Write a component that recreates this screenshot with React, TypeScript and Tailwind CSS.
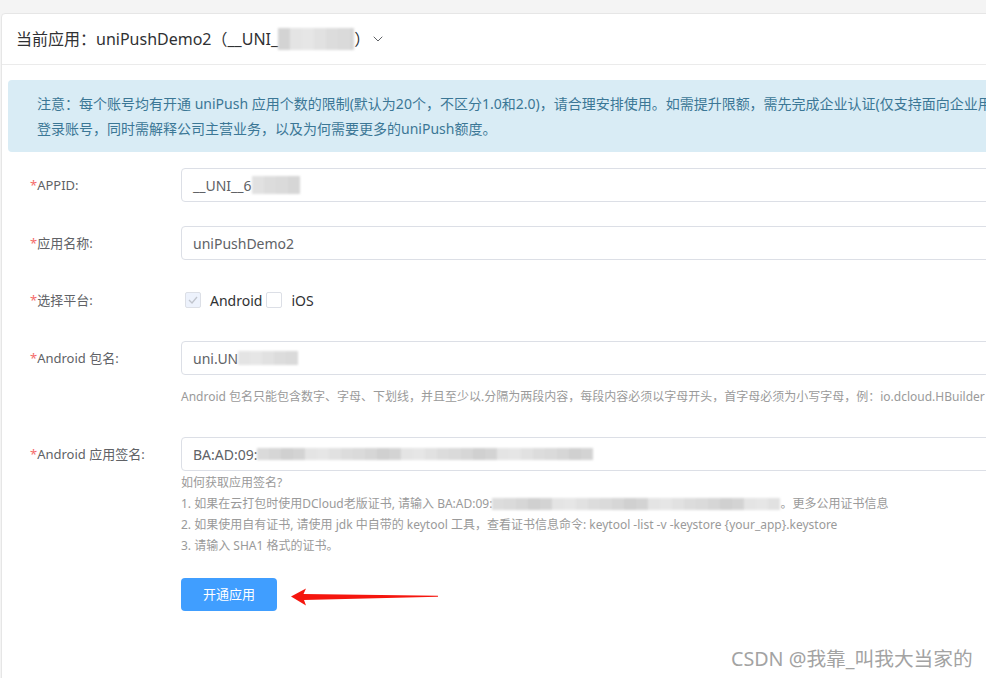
import { ChevronDown } from "lucide-react";

const font = "font-['Noto_Sans','Noto_Sans_CJK_SC',sans-serif]";

// mosaic cells used to hide ids in the screenshot
function Mosaic({ cells, h }: { cells: string[]; h: string }) {
  return (
    <span className={`inline-flex ${h} align-middle blur-[1px] opacity-90`}>
      {cells.map((c, i) => (
        <span key={i} className={`w-[12px] h-full shrink-0 ${c}`} />
      ))}
    </span>
  );
}

const grays = [
  "bg-[#d6d6d6]",
  "bg-[#cfcfcf]",
  "bg-[#dedede]",
  "bg-[#d2d2d2]",
  "bg-[#e2e2e2]",
  "bg-[#d9d9d9]",
  "bg-[#cbcbcb]",
  "bg-[#e4e4e4]",
];

function cellsOf(n: number, offset = 0) {
  return Array.from({ length: n }, (_, i) => grays[(i * 3 + offset) % grays.length]);
}

function Label({ children }: { children: React.ReactNode }) {
  return (
    <div className="w-[173px] shrink-0 pl-[22px] text-[13px] leading-[34px] text-[#606266]">
      <span className="text-[#f56c6c]">*</span>
      {children}
    </div>
  );
}

function Input({ children }: { children: React.ReactNode }) {
  return (
    <div className="h-[34px] flex-1 rounded-[4px] border border-[#dcdfe6] pl-[11px] flex items-center text-[14px] text-[#606266]">
      {children}
    </div>
  );
}

export default function App() {
  return (
    <div className={`relative w-[986px] h-[678px] overflow-hidden bg-[#f4f4f4] pt-[13px] pl-[1px] ${font}`}>
      <div className="w-[1100px] h-[700px] rounded-tl-[4px] border border-[#e6e6e6] bg-white">
        {/* header */}
        <div className="h-[51px] flex items-center pl-[14px] border-b border-[#ebebeb] text-[16px] text-[#303133]">
          <span>当前应用：uniPushDemo2（__UNI_</span>
          <Mosaic cells={cellsOf(7, 1)} h="h-[22px] w-[76px] overflow-hidden" />
          <span>）</span>
          <ChevronDown size={16} strokeWidth={1.5} className="ml-[0px] text-[#606266]" />
        </div>

        <div className="pl-[6px] pt-[15px] pr-[20px]">
          {/* notice */}
          <div className="h-[72px] rounded-[4px] bg-[#d9ecf5] pl-[29px] pt-[11px] text-[14px] leading-[25px] text-[#3b7796] whitespace-nowrap">
            <div>
              注意：每个账号均有开通 uniPush 应用个数的限制(默认为20个，不区分1.0和2.0)，请合理安排使用。如需提升限额，需先完成企业认证(仅支持面向企业用户)，
            </div>
            <div>登录账号，同时需解释公司主营业务，以及为何需要更多的uniPush额度。</div>
          </div>

          {/* form */}
          <div className="mt-[16px] flex flex-col">
            <div className="flex">
              <Label>APPID:</Label>
              <Input>
                <span>__UNI__6</span>
                <Mosaic cells={cellsOf(4, 2)} h="h-[18px]" />
              </Input>
            </div>

            <div className="mt-[24px] flex">
              <Label>应用名称:</Label>
              <Input>uniPushDemo2</Input>
            </div>

            <div className="mt-[23px] flex">
              <Label>选择平台:</Label>
              <div className="flex items-center h-[34px] pl-[4px] text-[14px] text-[#606266]">
                <span className="w-[16px] h-[16px] rounded-[2px] border border-[#dcdfe6] bg-[#edf2fc] flex items-center justify-center">
                  <svg width="10" height="8" viewBox="0 0 10 8">
                    <path d="M1 4 L4 7 L9 1" fill="none" stroke="#c0c4cc" strokeWidth="1.3" />
                  </svg>
                </span>
                <span className="ml-[9px] text-[#303133]">Android</span>
                <span className="ml-[4px] w-[16px] h-[16px] rounded-[2px] border border-[#dcdfe6] bg-white" />
                <span className="ml-[9px] text-[#303133]">iOS</span>
              </div>
            </div>

            <div className="mt-[24px] flex">
              <Label>Android 包名:</Label>
              <div className="flex-1">
                <Input>
                  <span>uni.UN</span>
                  <Mosaic cells={cellsOf(5, 4)} h="h-[14px]" />
                </Input>
                <div className="mt-[11px] text-[12px] leading-[21px] text-[#9a9a9a] whitespace-nowrap">
                  Android 包名只能包含数字、字母、下划线，并且至少以.分隔为两段内容，每段内容必须以字母开头，首字母必须为小写字母，例：io.dcloud.HBuilder
                </div>
              </div>
            </div>

            <div className="mt-[30px] flex">
              <Label>Android 应用签名:</Label>
              <div className="flex-1">
                <Input>
                  <span>BA:AD:09:</span>
                  <Mosaic cells={cellsOf(28, 0)} h="h-[12px]" />
                </Input>
                <div className="mt-[1px] text-[12px] leading-[21px] text-[#9a9a9a] whitespace-nowrap">
                  <div>如何获取应用签名?</div>
                  <div className="flex items-center">
                    <span>1. 如果在云打包时使用DCloud老版证书, 请输入 BA:AD:09:</span>
                    <Mosaic cells={cellsOf(24, 5)} h="h-[12px]" />
                    <span>。更多公用证书信息</span>
                  </div>
                  <div>
                    2. 如果使用自有证书, 请使用 jdk 中自带的 keytool 工具，查看证书信息命令: keytool -list -v -keystore {"{your_app}"}.keystore
                  </div>
                  <div>3. 请输入 SHA1 格式的证书。</div>
                </div>
                <button className="mt-[22px] h-[33px] w-[96px] rounded-[4px] bg-[#409eff] text-[13px] text-white">
                  开通应用
                </button>
              </div>
            </div>
          </div>
        </div>
      </div>

      {/* red annotation arrow */}
      <svg className="absolute left-[288px] top-[586px]" width="154" height="22" viewBox="0 0 154 22">
        <path d="M3 10.5 L18 2.5 L15.5 8 L150 9.8 L150 10.8 L16 14 L18 19.5 Z" fill="#f5160e" />
      </svg>

      {/* watermark */}
      <div className="absolute left-[731px] top-[645px] text-[19.7px] leading-[28px] text-[#a3a3a3] [text-shadow:0_0_2px_#fff]">
        CSDN @我靠_叫我大当家的
      </div>
    </div>
  );
}
